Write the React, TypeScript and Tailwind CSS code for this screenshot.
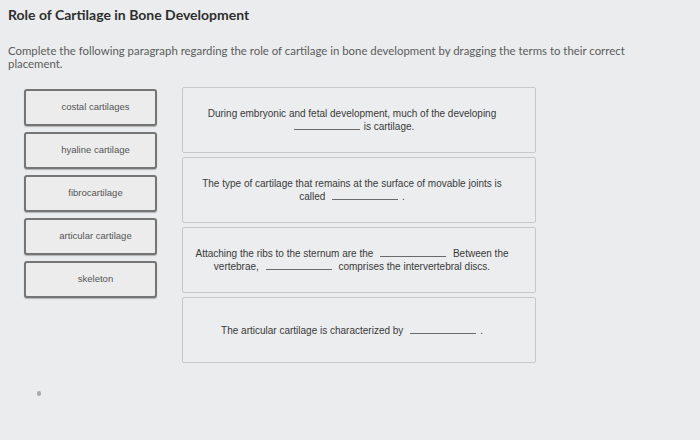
import React from 'react';

const terms = ['costal cartilages', 'hyaline cartilage', 'fibrocartilage', 'articular cartilage', 'skeleton'];

// Empty drop target drawn as an underline inside the sentence
function Blank() {
  return <span className="inline-block w-[66px] h-[10px] border-b border-[#6a6a6a] align-baseline mx-[4px]" />;
}

function DropBox({ children }: { children: React.ReactNode }) {
  return (
    <div className="h-[66px] border border-[#c6c9ca] rounded-[2px] bg-[#ebedee] flex items-center justify-center text-center pr-[14px]">
      <div className="font-['Liberation_Sans',Arial,sans-serif] text-[10px] leading-[12px] text-[#3a3a3a]">{children}</div>
    </div>
  );
}

export default function App() {
  return (
    <div className="w-[700px] h-[440px] bg-[#eaeced] relative overflow-hidden font-['Lato',sans-serif]">
      <div className="pl-[8px] pt-[7px]">
        <h1 className="text-[14px] leading-[16px] font-bold text-[#2f2f2f]">Role of Cartilage in Bone Development</h1>
        <p className="mt-[21px] text-[11.4px] leading-[13px] text-[#5c5c5c] w-[660px]">
          Complete the following paragraph regarding the role of cartilage in bone development by dragging the terms to their correct placement.
        </p>
      </div>

      <div className="flex mt-[17px] pl-[24px]">
        {/* draggable terms */}
        <div className="w-[133px] mt-[2px] flex flex-col gap-[6px]">
          {terms.map((t) => (
            <div
              key={t}
              className="h-[37px] border-2 border-[#757575] rounded-[3px] bg-[#ececec] shadow-[0_1px_1px_rgba(0,0,0,0.25)] flex items-center justify-center pl-[10px] font-['Liberation_Sans',Arial,sans-serif] text-[9.5px] text-[#555]"
            >
              {t}
            </div>
          ))}
        </div>

        {/* sentences with blanks */}
        <div className="ml-[25px] w-[354px] flex flex-col gap-[4px]">
          <DropBox>
            <span className="block">During embryonic and fetal development, much of the developing</span>
            <span className="block"><Blank />is cartilage.</span>
          </DropBox>
          <DropBox>
            <span className="block">The type of cartilage that remains at the surface of movable joints is</span>
            <span className="block">called <Blank />.</span>
          </DropBox>
          <DropBox>
            <span className="block">Attaching the ribs to the sternum are the <Blank /> Between the</span>
            <span className="block">vertebrae, <Blank /> comprises the intervertebral discs.</span>
          </DropBox>
          <DropBox>
            <span className="block">The articular cartilage is characterized by <Blank />.</span>
          </DropBox>
        </div>
      </div>

      <div className="absolute left-[37px] top-[391px] w-[4px] h-[5px] rounded-full bg-[#a9abac]" />
    </div>
  );
}
